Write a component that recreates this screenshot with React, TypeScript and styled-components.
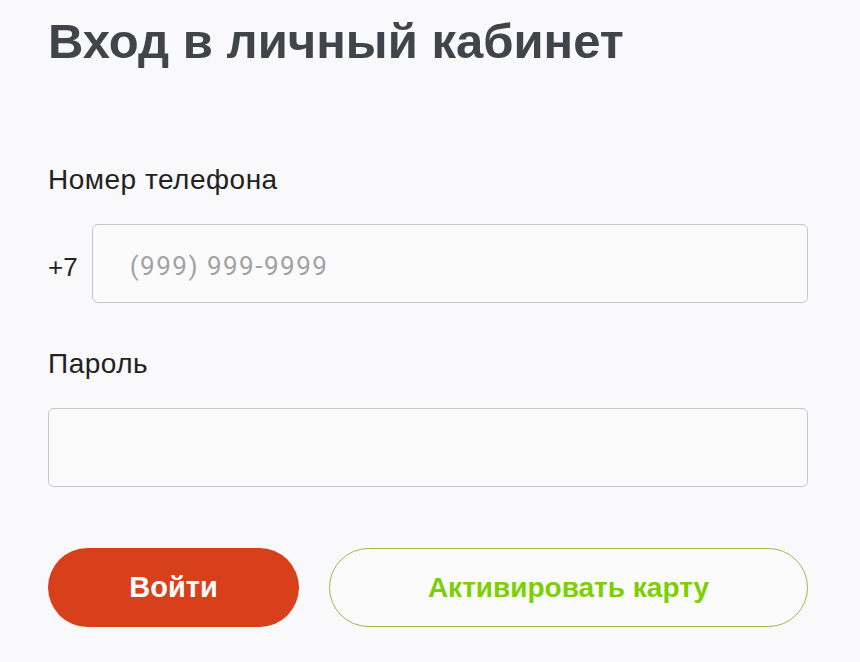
import React from "react";
import styled, { createGlobalStyle } from "styled-components";

const Global = createGlobalStyle`
  html, body { margin: 0; padding: 0; background: #f9f9fb; }
  * { box-sizing: border-box; }
`;

const Page = styled.div`
  width: 860px;
  min-height: 662px;
  padding: 13px 52px 0 48px;
  background: #f9f9fb;
  font-family: "Liberation Sans", Arial, sans-serif;
`;

const Title = styled.h1`
  margin: 0 0 96px 0;
  font-size: 49px;
  line-height: 56px;
  font-weight: 700;
  color: #40444b;
  letter-spacing: 0;
`;

const Field = styled.div<{ $gapAfter: number }>`
  display: flex;
  flex-direction: column;
  gap: 29px;
  margin-bottom: ${(p) => p.$gapAfter}px;
`;

const Label = styled.label`
  font-size: 28px;
  line-height: 30px;
  letter-spacing: 0.5px;
  color: #222;
  font-weight: 400;
`;

const PhoneRow = styled.div`
  display: flex;
  align-items: center;
  gap: 14px;
`;

const Prefix = styled.span`
  font-size: 26px;
  color: #222;
  line-height: 30px;
  width: 30px;
  margin-top: 6px;
`;

const Input = styled.input`
  flex-grow: 1;
  min-width: 0;
  width: 100%;
  height: 79px;
  border: 1px solid #c6c6ca;
  border-radius: 6px;
  background: #fbfbfc;
  padding: 4px 0 0 37px;
  font-family: Roboto, "Liberation Sans", sans-serif;
  font-size: 26px;
  letter-spacing: 1.5px;
  color: #333;
  outline: none;
  &::placeholder {
    color: #a2a2a5;
  }
`;

const Buttons = styled.div`
  display: flex;
  gap: 30px;
`;

const Button = styled.button<{ $variant: "primary" | "outline" }>`
  height: 79px;
  border-radius: 40px;
  font-family: "Liberation Sans", Arial, sans-serif;
  font-weight: 700;
  cursor: pointer;
  ${(p) =>
    p.$variant === "primary"
      ? `
    width: 251px;
    background: #d8401b;
    border: none;
    color: #fff;
    font-size: 29px;
  `
      : `
    flex: 1;
    background: #fbfbfc;
    border: 1.5px solid #9cb94a;
    color: #7ccf00;
    font-size: 28px;
  `}
`;

export default function App() {
  return (
    <>
      <Global />
      <Page>
        <Title>Вход в личный кабинет</Title>
        <Field $gapAfter={46}>
          <Label>Номер телефона</Label>
          <PhoneRow>
            <Prefix>+7</Prefix>
            <Input type="tel" placeholder="(999) 999-9999" />
          </PhoneRow>
        </Field>
        <Field $gapAfter={61}>
          <Label>Пароль</Label>
          <Input type="password" />
        </Field>
        <Buttons>
          <Button $variant="primary">Войти</Button>
          <Button $variant="outline">Активировать карту</Button>
        </Buttons>
      </Page>
    </>
  );
}
